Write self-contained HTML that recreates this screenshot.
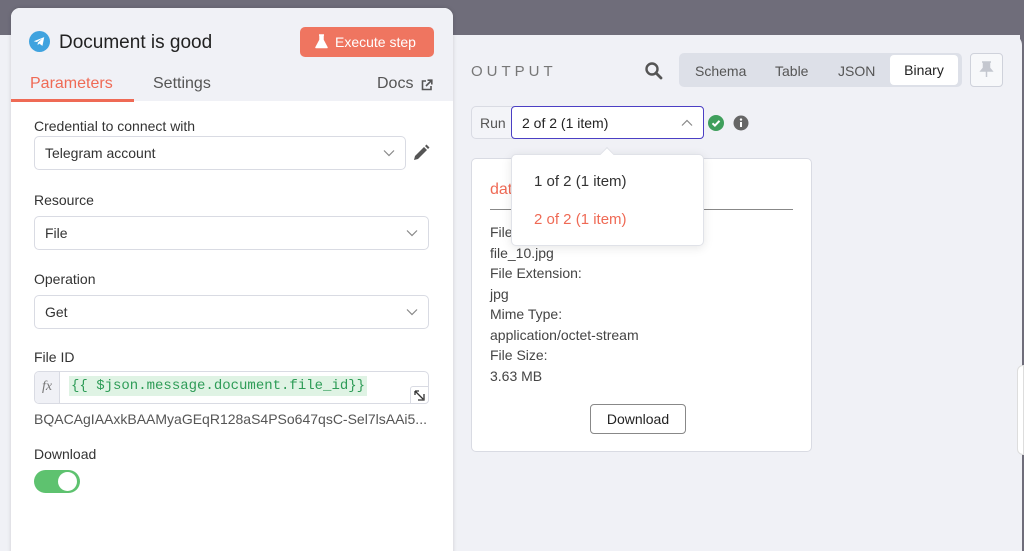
<!DOCTYPE html>
<html><head><meta charset="utf-8"><style>
*{box-sizing:border-box;margin:0;padding:0}
html,body{width:1024px;height:551px;overflow:hidden}
body{background:#f0f1f6;font-family:"Liberation Sans",sans-serif;position:relative;color:#333}
.a{position:absolute}
.lbl{font-size:14px;color:#333}
.sel{position:absolute;background:#fff;border:1px solid #d9dbe3;border-radius:5px;height:34px;font-size:14px;padding:0 10px;line-height:33px;color:#333}
.chev{position:absolute;right:10px;top:12px}
</style></head><body>
<div class="a" style="left:0;top:0;width:1024px;height:35px;background:#6f6d7a"></div>
<div class="a" style="left:1020px;top:35px;width:4px;height:516px;background:#6f6d7a"></div>
<div class="a" style="left:440px;top:35px;width:582px;height:516px;background:#f0f1f6;border-top-right-radius:10px"></div>
<div class="a" style="left:1017px;top:365px;width:7px;height:90px;background:#fff;border-radius:6px 0 0 6px;border:1px solid #ddd"></div>
<!-- left panel -->
<div class="a" style="left:11px;top:8px;width:442px;height:560px;background:#fff;border-radius:9px;overflow:hidden;box-shadow:0 0 4px rgba(0,0,0,.15)">
 <div class="a" style="left:0;top:0;width:442px;height:93px;background:#f0f1f6"></div>
 <svg class="a" style="left:18px;top:23px" width="21" height="21" viewBox="0 0 20 20"><circle cx="10" cy="10" r="10" fill="#40a3df"/><path d="M4.5 9.8l10-4-1.7 8.4-3-2.2-1.6 1.5.2-2.4 4-3.7-5 3.1z" fill="#fff"/></svg>
 <div class="a" style="left:48px;top:24px;font-size:19px;color:#222">Document is good</div>
 <div class="a" style="left:289px;top:19px;width:134px;height:30px;background:#ef7560;border-radius:5px;color:#fff;font-size:14px;line-height:30px;padding-left:35px">Execute step</div>
 <svg class="a" style="left:304px;top:26px" width="13" height="15" viewBox="0 0 13 15"><path d="M4 1h5M5 1v5L1 13.5h11L8 6V1" fill="#fff" stroke="#fff" stroke-width="1.5" stroke-linejoin="round"/></svg>
 <div class="a" style="left:19px;top:67px;font-size:16px;color:#ef6a55">Parameters</div>
 <div class="a" style="left:0;top:91px;width:123px;height:3px;background:#ef6a55"></div>
 <div class="a" style="left:142px;top:67px;font-size:16px;color:#555">Settings</div>
 <div class="a" style="left:366px;top:67px;font-size:16px;color:#555">Docs</div>
 <svg class="a" style="left:410px;top:71px" width="12" height="12" viewBox="0 0 12 12" fill="none" stroke="#555" stroke-width="1.6"><path d="M5 2H1.5v8.5H10V7M6.5 1.2h4.3v4.3M10.8 1.2L5 7"/></svg>
</div>
<div class="a lbl" style="left:34px;top:118px">Credential to connect with</div>
<div class="sel" style="left:34px;top:136px;width:372px">Telegram account<svg class="chev" width="12" height="8" viewBox="0 0 12 8"><path d="M1 1.5l5 5 5-5" fill="none" stroke="#888" stroke-width="1.2"/></svg></div>
<svg class="a" style="left:412px;top:144px" width="18" height="18" viewBox="0 0 18 18"><path d="M2 16l1-4 9-9 3 3-9 9zM13 2l1.5-1.5 3 3L16 5z" fill="#555"/></svg>
<div class="a lbl" style="left:34px;top:192px">Resource</div>
<div class="sel" style="left:34px;top:216px;width:395px">File<svg class="chev" width="12" height="8" viewBox="0 0 12 8"><path d="M1 1.5l5 5 5-5" fill="none" stroke="#888" stroke-width="1.2"/></svg></div>
<div class="a lbl" style="left:34px;top:271px">Operation</div>
<div class="sel" style="left:34px;top:295px;width:395px">Get<svg class="chev" width="12" height="8" viewBox="0 0 12 8"><path d="M1 1.5l5 5 5-5" fill="none" stroke="#888" stroke-width="1.2"/></svg></div>
<div class="a lbl" style="left:34px;top:349px">File ID</div>
<div class="a" style="left:34px;top:371px;width:395px;height:33px;border:1px solid #d9dbe3;border-radius:5px;background:#fff"></div>
<div class="a" style="left:35px;top:372px;width:25px;height:31px;background:#f0f1f6;border-right:1px solid #d9dbe3;border-radius:4px 0 0 4px;font-family:'Liberation Serif',serif;font-style:italic;font-size:14px;color:#777;text-align:center;line-height:30px">fx</div>
<div class="a" style="left:69px;top:376px;height:20px;background:#dff3e4;color:#2e9c57;font-family:'Liberation Mono',monospace;font-size:14px;line-height:20px;padding:0 2px">{{ $json.message.document.file_id}}</div>
<div class="a" style="left:410px;top:386px;width:19px;height:18px;background:#fff;border:1px solid #d9dbe3;border-radius:3px 0 4px 0"><svg width="17" height="16" viewBox="0 0 17 16"><path d="M4 4l8 8M4 4v4M4 4h4M13 7v6H7" fill="none" stroke="#333" stroke-width="1.3"/></svg></div>
<div class="a" style="left:34px;top:411px;font-size:14px;color:#555">BQACAgIAAxkBAAMyaGEqR128aS4PSo647qsC-Sel7lsAAi5...</div>
<div class="a lbl" style="left:34px;top:446px">Download</div>
<div class="a" style="left:34px;top:470px;width:46px;height:23px;border-radius:12px;background:#5ec26f"></div>
<div class="a" style="left:58px;top:472px;width:19px;height:19px;border-radius:50%;background:#fff"></div>
<!-- output -->
<div class="a" style="left:471px;top:63px;font-size:15px;letter-spacing:4px;color:#777">OUTPUT</div>
<svg class="a" style="left:644px;top:61px" width="19" height="19" viewBox="0 0 19 19"><circle cx="8" cy="8" r="5.5" fill="none" stroke="#555" stroke-width="2.4"/><path d="M12 12l5 5" stroke="#555" stroke-width="2.8" stroke-linecap="round"/></svg>
<div class="a" style="left:679px;top:53px;width:283px;height:34px;background:#dde0e8;border-radius:5px"></div>
<div class="a" style="left:695px;top:63px;font-size:14px;color:#555">Schema</div>
<div class="a" style="left:775px;top:63px;font-size:14px;color:#555">Table</div>
<div class="a" style="left:838px;top:63px;font-size:14px;color:#555">JSON</div>
<div class="a" style="left:890px;top:55px;width:68px;height:30px;background:#fff;border-radius:4px;font-size:14px;color:#222;text-align:center;line-height:31px">Binary</div>
<div class="a" style="left:970px;top:53px;width:33px;height:34px;border:1px solid #cfd2db;border-radius:4px;background:#f7f8fa"></div>
<svg class="a" style="left:979px;top:61px" width="15" height="17" viewBox="0 0 15 17"><path d="M3 1h9M4.5 1v6L2 10h11l-2.5-3V1M7.5 10v6" fill="#c4c7cf" stroke="#c4c7cf" stroke-width="1.5"/></svg>
<div class="a" style="left:471px;top:106px;width:233px;height:33px;border:1px solid #d9dbe3;border-radius:5px;background:#f3f4f8;font-size:14px;color:#555;line-height:33px;padding-left:8px">Run</div>
<div class="a" style="left:511px;top:106px;width:193px;height:33px;border:1px solid #4b3fc4;border-radius:4px;background:#fff;font-size:14px;color:#222;line-height:33px;padding-left:10px">2 of 2 (1 item)<svg class="chev" style="top:12px" width="12" height="8" viewBox="0 0 12 8"><path d="M1 6.5l5-5 5 5" fill="none" stroke="#888" stroke-width="1.2"/></svg></div>
<svg class="a" style="left:708px;top:115px" width="16" height="16" viewBox="0 0 16 16"><circle cx="8" cy="8" r="8" fill="#3f9f5c"/><path d="M4.5 8.3l2.4 2.3 4.6-4.8" fill="none" stroke="#fff" stroke-width="2"/></svg>
<svg class="a" style="left:733px;top:115px" width="16" height="16" viewBox="0 0 16 16"><circle cx="8" cy="8" r="7.5" fill="#666"/><rect x="7" y="7" width="2" height="5" fill="#fff"/><circle cx="8" cy="4.6" r="1.2" fill="#fff"/></svg>
<div class="a" style="left:471px;top:158px;width:341px;height:294px;background:#fff;border:1px solid #d9dbe3;border-radius:5px"></div>
<div class="a" style="left:490px;top:181px;font-size:16px;color:#ef6a55">data</div>
<div class="a" style="left:490px;top:209px;width:303px;height:1px;background:#888"></div>
<div class="a" style="left:490px;top:222px;font-size:14px;line-height:20.5px;color:#444">File Name:<br>file_10.jpg<br>File Extension:<br>jpg<br>Mime Type:<br>application/octet-stream<br>File Size:<br>3.63 MB</div>
<div class="a" style="left:590px;top:404px;width:96px;height:30px;border:1px solid #888;border-radius:4px;background:#fff;font-size:14px;color:#222;text-align:center;line-height:29px">Download</div>
<div class="a" style="left:511px;top:154px;width:193px;height:92px;background:#fff;border:1px solid #e0e2e8;border-radius:5px;box-shadow:0 2px 10px rgba(0,0,0,.1)"></div>
<div class="a" style="left:602px;top:149px;width:10px;height:10px;background:#fff;transform:rotate(45deg);border-left:1px solid #e0e2e8;border-top:1px solid #e0e2e8"></div>
<div class="a" style="left:534px;top:173px;font-size:15px;color:#333">1 of 2 (1 item)</div>
<div class="a" style="left:534px;top:211px;font-size:15px;color:#ef6a55">2 of 2 (1 item)</div>
</body></html>
